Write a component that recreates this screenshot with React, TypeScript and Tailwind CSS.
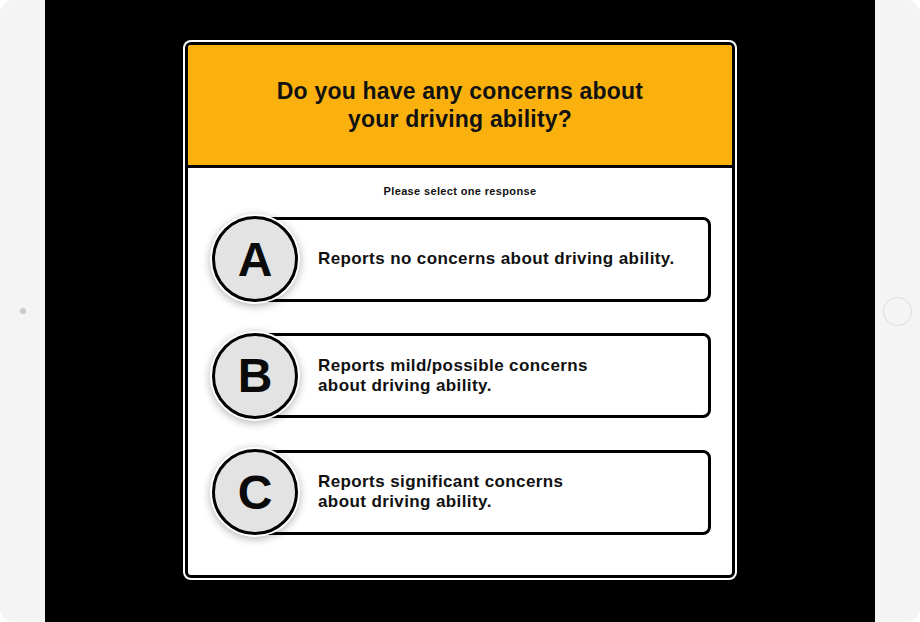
import React from 'react';

const options = [
  { letter: 'A', lines: ['Reports no concerns about driving ability.'] },
  { letter: 'B', lines: ['Reports mild/possible concerns', 'about driving ability.'] },
  { letter: 'C', lines: ['Reports significant concerns', 'about driving ability.'] },
];

function OptionRow({ letter, lines }: { letter: string; lines: string[] }) {
  return (
    <div className="flex items-center h-[90px]">
      <div className="relative z-10 w-[90px] h-[90px] shrink-0 rounded-full bg-white p-[2px] shadow-[0_2px_8px_rgba(0,0,0,0.3)]">
        <div className="w-full h-full rounded-full border-[3px] border-black bg-[#e3e3e3] flex items-center justify-center">
          <span className="text-[48px] leading-none font-bold text-[#0a0a0a] mt-[1px]">{letter}</span>
        </div>
      </div>
      <div className="flex-1 -ml-[45px] h-[85px] rounded-[8px] border-[3px] border-black bg-white flex flex-col justify-center pl-[60px]">
        {lines.map((l) => (
          <div key={l} className="text-[17px] leading-[20px] font-bold tracking-[0.4px] text-[#111]">
            {l}
          </div>
        ))}
      </div>
    </div>
  );
}

export default function App() {
  return (
    <div
      className="w-[920px] h-[622px] bg-white"
      style={{ fontFamily: '"Liberation Sans", Arial, sans-serif' }}
    >
      <div className="flex w-full h-full rounded-[14px] overflow-hidden bg-[#f4f4f4]">
        {/* left bezel */}
        <div className="w-[45px] flex items-center justify-center">
          <div className="w-[6px] h-[6px] rounded-full bg-[#c9c9c9] blur-[0.6px]" />
        </div>

        {/* screen */}
        <div className="flex-1 bg-black flex justify-center pt-[40px]">
          <div className="w-[554px] h-[540px] rounded-[8px] bg-white p-[2px]">
            <div className="w-full h-full rounded-[6px] border-[3px] border-black bg-white overflow-hidden flex flex-col">
              <div className="h-[123px] shrink-0 bg-[#fab10e] border-b-[3px] border-black flex flex-col items-center justify-center">
                <div className="text-[23px] leading-[28px] font-bold tracking-[0.2px] text-[#111] text-center">
                  Do you have any concerns about
                </div>
                <div className="text-[23px] leading-[28px] font-bold tracking-[0.2px] text-[#111] text-center">
                  your driving ability?
                </div>
              </div>
              <div className="pt-[16px] text-center text-[11px] leading-[14px] font-bold tracking-[0.35px] text-[#111]">
                Please select one response
              </div>
              <div className="mt-[16px] pl-[22px] pr-[21px] flex flex-col gap-[26.5px]">
                {options.map((o) => (
                  <OptionRow key={o.letter} letter={o.letter} lines={o.lines} />
                ))}
              </div>
            </div>
          </div>
        </div>

        {/* right bezel */}
        <div className="w-[45px] flex items-center justify-center">
          <div className="w-[29px] h-[29px] rounded-full border border-[#dcdcdc]" />
        </div>
      </div>
    </div>
  );
}
